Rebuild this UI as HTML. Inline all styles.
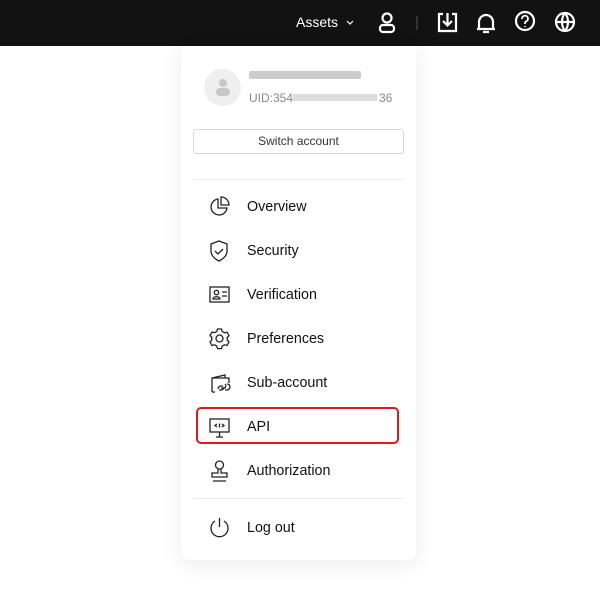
<!DOCTYPE html>
<html><head><style>
body{margin:0;width:600px;height:600px;background:#fff;font-family:"Liberation Sans",sans-serif;position:relative;overflow:hidden}
.hdr{position:absolute;left:0;top:0;width:600px;height:46px;background:#121212}
.hdr .t{position:absolute;left:296px;top:14px;color:#fff;font-size:14px}
.card{position:absolute;left:181px;top:46px;width:235px;height:514px;background:#fff;border-radius:0 0 8px 8px;box-shadow:0 4px 20px rgba(0,0,0,.08)}
.item{position:absolute;left:20px;height:36px;width:200px}
.item svg{position:absolute;left:8px;top:7px}
.item span{position:absolute;left:46px;top:10px;font-size:14.3px;color:#111}
svg{overflow:visible}
</style></head><body>
<div class="hdr">
<span class="t">Assets</span>
<svg width="600" height="46" style="position:absolute;left:0;top:0" fill="none" stroke="#fff" stroke-width="2.2">
<path d="M347 21l3 3 3-3" stroke-width="1.2"/>
<circle cx="387" cy="18" r="4.5"/><rect x="380" y="25" width="14" height="7" rx="3"/>
<path d="M417 16v14" stroke="#555" stroke-width="1"/>
<path d="M443 14h-4v17h17v-17h-4M447.5 13v12M443 21l4.5 4.5 4.5-4.5"/>
<path d="M479 29v-7a7 7 0 0 1 14 0v7zM477 29h18M483 32h6"/>
<circle cx="525" cy="21" r="9"/><path d="M522 19a3 3 0 1 1 4 2.5c-1 .5-1 1-1 2.5M525 26v1" stroke-width="1.8"/>
<circle cx="565" cy="22" r="9"/><path d="M556 22h18M565 13c-4 5-4 13 0 18M565 13c4 5 4 13 0 18"/>
</svg>
</div>
<div class="card">
<div style="position:absolute;left:23px;top:23px;width:37px;height:37px;border-radius:50%;background:#efefef"></div>
<svg style="position:absolute;left:35px;top:32px" width="14" height="18"><circle cx="7" cy="5" r="4" fill="#c8c8c8"/><rect x="0" y="10" width="14" height="8" rx="4" fill="#c8c8c8"/></svg>
<div style="position:absolute;left:68px;top:25px;width:112px;height:8px;background:#ccc;border-radius:2px"></div>
<span style="position:absolute;left:68px;top:45px;font-size:12px;color:#888">UID:354</span>
<div style="position:absolute;left:112px;top:48px;width:84px;height:7px;background:#ddd"></div>
<span style="position:absolute;left:198px;top:45px;font-size:12px;color:#888">36</span>
<div style="position:absolute;left:12px;top:83px;width:211px;height:25px;border:1px solid #d8d8d8;border-radius:3px;box-sizing:border-box;text-align:center;font-size:12px;line-height:23px;color:#333">Switch account</div>
<div style="position:absolute;left:12px;top:133px;width:212px;height:1px;background:#eee"></div>
<div style="position:absolute;left:12px;top:452px;width:212px;height:1px;background:#eee"></div>
<div style="position:absolute;left:15px;top:361px;width:203px;height:37px;border:2px solid #e01a1a;border-radius:5px;box-sizing:border-box"></div>
<div class="item" style="top:143px"><svg width="22" height="22" fill="none" stroke="#222" stroke-width="1.3"><path d="M9 3a8 8 0 1 0 9 9h-9z"/><path d="M12 1v8h8a8 8 0 0 0-8-8z"/></svg><span>Overview</span></div>
<div class="item" style="top:187px"><svg width="22" height="22" fill="none" stroke="#222" stroke-width="1.3"><path d="M10 1l8 3v7c0 5-4 8-8 10-4-2-8-5-8-10V4z"/><path d="M6 11l3 3 5-5"/></svg><span>Security</span></div>
<div class="item" style="top:231px"><svg width="22" height="22" fill="none" stroke="#222" stroke-width="1.3"><rect x="1" y="3" width="19" height="15"/><circle cx="7.5" cy="8.5" r="2.2"/><path d="M4 15c0-3 7-3 7 0zM13 8h5M13 12h5"/></svg><span>Verification</span></div>
<div class="item" style="top:275px"><svg width="22" height="22" fill="none" stroke="#222" stroke-width="1.3"><circle cx="10.5" cy="10.5" r="3.5"/><path d="M8.5 1h4l.7 2.5 2.3 1.3 2.5-.7 2 3.5-1.8 1.9v2.6l1.8 1.9-2 3.5-2.5-.7-2.3 1.3-.7 2.5h-4l-.7-2.5-2.3-1.3-2.5.7-2-3.5 1.8-1.9V9.4L1 7.5l2-3.5 2.5.7 2.3-1.3z"/></svg><span>Preferences</span></div>
<div class="item" style="top:319px"><svg width="22" height="22" fill="none" stroke="#222" stroke-width="1.3"><path d="M3 20V6l13-3v3M3 6h17v5M3 20h3"/><path d="M9 17a3 3 0 0 1 3-3h2M15 15a3 3 0 0 1-3 3h-2M12 16h4a3 3 0 0 0 0-4M16 18h2a3 3 0 0 0 0-6" /></svg><span>Sub-account</span></div>
<div class="item" style="top:363px"><svg width="22" height="22" fill="none" stroke="#222" stroke-width="1.3"><rect x="1" y="3" width="19" height="13"/><path d="M7 21h7M10.5 16v5M8 8l-2 1.5L8 11M13 8l2 1.5-2 1.5M10.5 7.5v4"/></svg><span>API</span></div>
<div class="item" style="top:407px"><svg width="22" height="22" fill="none" stroke="#222" stroke-width="1.3"><circle cx="10.5" cy="5" r="4"/><path d="M9 9v4H3v4h15v-4h-6V9M4 21h13"/></svg><span>Authorization</span></div>
<div class="item" style="top:464px"><svg width="22" height="22" fill="none" stroke="#222" stroke-width="1.3"><path d="M10.5 1v9M6 4a8.5 8.5 0 1 0 9 0"/></svg><span>Log out</span></div>
</div>
</body></html>
